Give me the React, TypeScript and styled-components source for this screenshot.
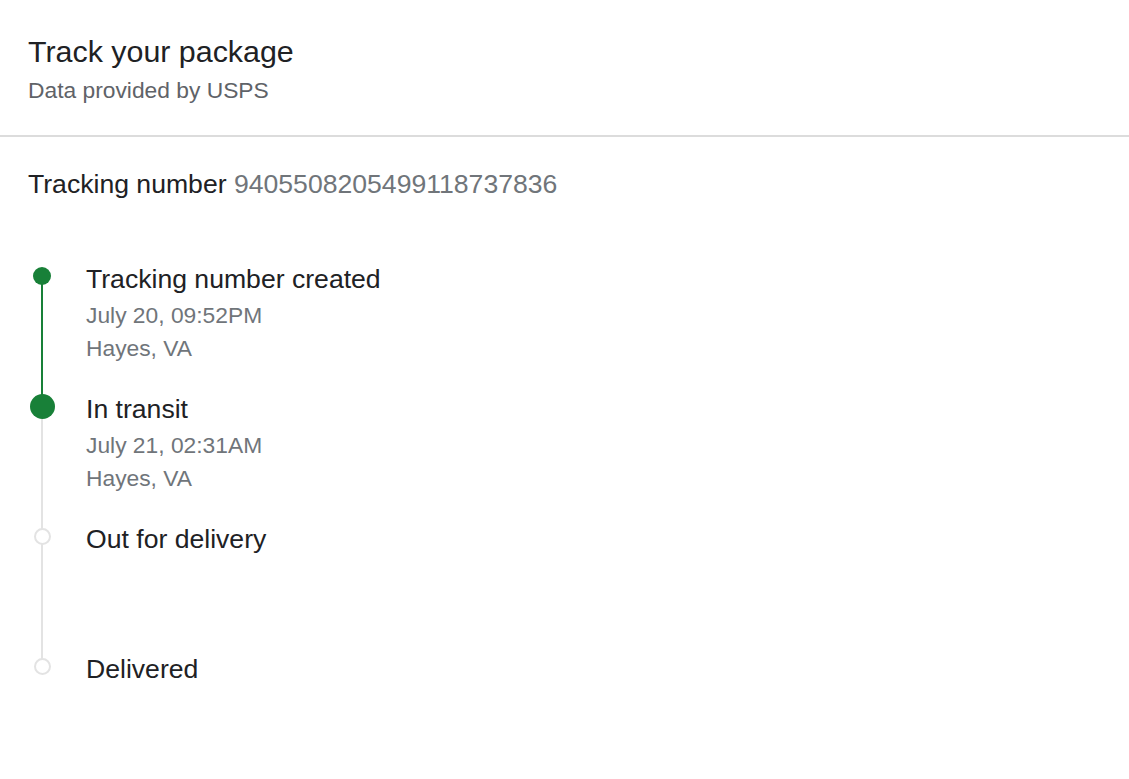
import React from "react";
import styled, { createGlobalStyle } from "styled-components";

const Global = createGlobalStyle`
  html, body { margin: 0; padding: 0; background: #ffffff; }
  body { font-family: "Liberation Sans", Arial, Helvetica, sans-serif; color: #202124; }
`;

const Page = styled.div`
  width: 100%;
  min-height: 779px;
  background: #fff;
`;

const Header = styled.header`
  padding: 31px 28px 28px;
  border-bottom: 2px solid #dcdcdc;
`;

const Title = styled.h1`
  margin: 0 0 2px;
  font-size: 30.4px;
  line-height: 40px;
  font-weight: 400;
  color: #202124;
`;

const Subtitle = styled.div`
  font-size: 22.8px;
  line-height: 34px;
  color: #5f6368;
`;

const Body = styled.section`
  padding: 30px 28px 0;
`;

const TrackingLine = styled.div`
  font-size: 26.6px;
  line-height: 34px;
  color: #202124;
  margin-bottom: 58px;
`;

const TrackingNo = styled.span`
  color: #70757a;
`;

const Timeline = styled.ol`
  list-style: none;
  margin: 0;
  padding: 0;
`;

const Item = styled.li`
  display: flex;
  gap: 30px;
  min-height: 130px;
`;

const Marker = styled.div<{ $line: "green" | "gray" | "none" }>`
  position: relative;
  width: 28px;
  flex: 0 0 28px;
  &::before {
    content: "";
    display: ${(p) => (p.$line === "none" ? "none" : "block")};
    position: absolute;
    left: 13px;
    width: 2px;
    top: 17px;
    bottom: -17px;
    background: ${(p) => (p.$line === "green" ? "#188038" : "#e3e3e3")};
  }
`;

const DotSlot = styled.div`
  position: relative;
  z-index: 1;
  height: 34px;
  display: flex;
  align-items: center;
  justify-content: center;
`;

const Dot = styled.span<{ $kind: "done" | "current" | "pending" }>`
  display: block;
  box-sizing: border-box;
  border-radius: 50%;
  width: ${(p) => (p.$kind === "current" ? 25 : p.$kind === "done" ? 18 : 17)}px;
  height: ${(p) => (p.$kind === "current" ? 25 : p.$kind === "done" ? 18 : 17)}px;
  background: ${(p) => (p.$kind === "pending" ? "#fff" : "#188038")};
  border: ${(p) => (p.$kind === "pending" ? "2px solid #e3e3e3" : "none")};
`;

const Content = styled.div`
  display: flex;
  flex-direction: column;
`;

const EventTitle = styled.div`
  font-size: 26.6px;
  line-height: 40px;
  color: #202124;
`;

const EventMeta = styled.div`
  font-size: 22.8px;
  line-height: 33px;
  color: #70757a;
`;

type Ev = {
  title: string;
  date?: string;
  place?: string;
  kind: "done" | "current" | "pending";
  line: "green" | "gray" | "none";
};

const events: Ev[] = [
  { title: "Tracking number created", date: "July 20, 09:52PM", place: "Hayes, VA", kind: "done", line: "green" },
  { title: "In transit", date: "July 21, 02:31AM", place: "Hayes, VA", kind: "current", line: "gray" },
  { title: "Out for delivery", kind: "pending", line: "gray" },
  { title: "Delivered", kind: "pending", line: "none" },
];

export default function App() {
  return (
    <Page>
      <Global />
      <Header>
        <Title>Track your package</Title>
        <Subtitle>Data provided by USPS</Subtitle>
      </Header>
      <Body>
        <TrackingLine>
          Tracking number <TrackingNo>9405508205499118737836</TrackingNo>
        </TrackingLine>
        <Timeline>
          {events.map((e) => (
            <Item key={e.title}>
              <Marker $line={e.line}>
                <DotSlot>
                  <Dot $kind={e.kind} />
                </DotSlot>
              </Marker>
              <Content>
                <EventTitle>{e.title}</EventTitle>
                {e.date && <EventMeta>{e.date}</EventMeta>}
                {e.place && <EventMeta>{e.place}</EventMeta>}
              </Content>
            </Item>
          ))}
        </Timeline>
      </Body>
    </Page>
  );
}
